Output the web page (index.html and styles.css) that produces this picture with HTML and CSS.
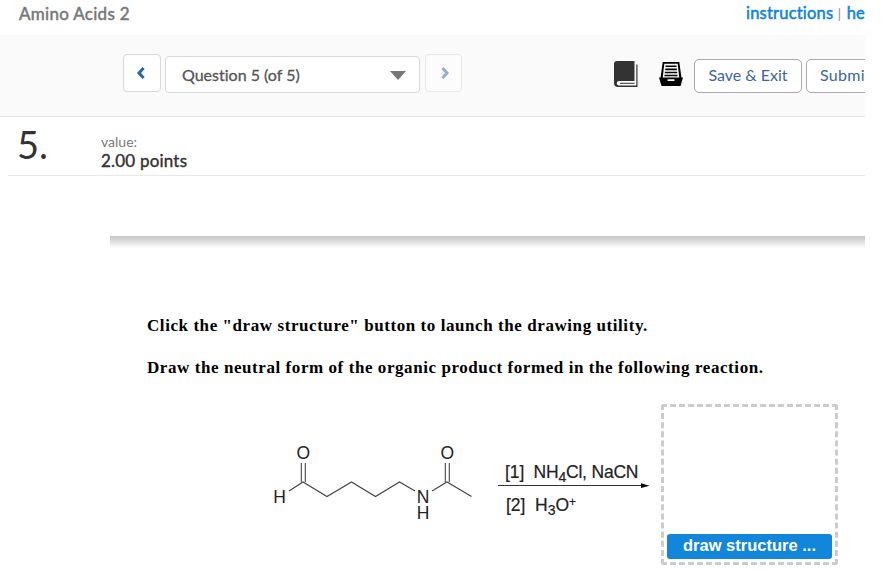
FILE: index.html
```
<!DOCTYPE html>
<html lang="en">
<head>
  <meta charset="UTF-8" />
  <title>Amino Acids 2</title>
  <link rel="stylesheet" href="styles.css">
</head>
<body>
  <div class="page">
    <div class="header">
      <h1>Amino Acids 2</h1>
      <div class="links"><a>instructions</a> <span>|</span> <a>help</a></div>
    </div>
    <div class="toolbar">
      <button class="nav prev">
        <svg width="10" height="14" viewBox="0 0 10 14"><path d="M7.6 2 3 7l4.6 5" /></svg>
      </button>
      <div class="select">
        <span>Question 5 (of 5)</span>
        <svg width="16" height="9" viewBox="0 0 16 9"><path d="M0 0h16L8 9z" /></svg>
      </div>
      <button class="nav next">
        <svg width="10" height="14" viewBox="0 0 10 14"><path d="M2.4 2 7 7l-4.6 5" /></svg>
      </button>
      <svg class="book" width="24" height="27" viewBox="0 0 24 27">
        <path d="M3 0h17.500v20H5c-3 0-3 4.500 0 4.500h17.300V3.500h1.200V26H4c-2.500 0-4-1.500-4-4V3c0-2 1-3 3-3z" />
        <path d="M6 22.300h14.500" class="line" />
      </svg>
      <svg class="tray" width="24" height="24" viewBox="0 0 24 24">
        <path d="M3.700 0h16.600l2.200 16h-2.200L18.700 1.700H5.300L3.700 16H1.500z" />
        <path d="M6.500 3.500h11v1.600h-11zM6.200 6.600h11.600v1.600H6.200zM5.800 9.700h12.400v1.600H5.800zM5.500 12.700h13v1.500h-13z" />
        <path fill-rule="evenodd" d="M0 15.500h24L21.500 24h-19zM8.500 17.200v1.900h7v-1.900z" />
      </svg>
      <button class="action save">Save &amp; Exit</button>
      <button class="action submit">Submit</button>
    </div>
    <div class="question">
      <div class="number">5.</div>
      <div class="points">
        <label>value:</label>
        <strong>2.00 points</strong>
      </div>
    </div>
    <div class="content">
      <p class="launch">Click the "draw structure" button to launch the drawing utility.</p>
      <p class="task">Draw the neutral form of the organic product formed in the following reaction.</p>
      <div class="reaction">
        <svg width="390" height="90" viewBox="265 438 390 90">
          <g class="bonds">
            <path d="M289 491 303 482 327 496.500 351.500 482 375.500 496.500 399.500 482 415 491" />
            <path d="M301.300 463v19M305.300 463v19" />
            <path d="M432 491 447 482 471.500 496.500" />
            <path d="M445.300 463v19M449.300 463v19" />
          </g>
          <g class="atoms">
            <text x="303.200" y="459">O</text>
            <text x="279.500" y="503">H</text>
            <text x="423" y="503">N</text>
            <text x="423" y="518.500">H</text>
            <text x="447.200" y="459">O</text>
          </g>
          <path class="arrow" d="M498 485.500h145" />
          <path d="M641 483.200l8.500 2.500-8.500 2.300z" />
          <g class="reagents">
            <text x="505" y="477.500">[1]</text>
            <text x="533.500" y="477.500" textLength="105">NH<tspan class="sub" dy="4">4</tspan><tspan dy="-4">Cl, NaCN</tspan></text>
            <text x="506" y="511">[2]</text>
            <text x="535" y="511">H<tspan class="sub" dy="4">3</tspan><tspan dy="-4">O</tspan><tspan class="sup" dy="-5">+</tspan></text>
          </g>
        </svg>
        <div class="answer">
          <button>draw structure ...</button>
        </div>
      </div>
    </div>
  </div>
</body>
</html>
```
FILE: styles.css
```
* { box-sizing: border-box; }
body { margin: 0; background: white; font-family: Lato, sans-serif; font-variant-ligatures: none; overflow: hidden; }
button { padding: 0; font-family: inherit; background: white; }
.page { width: 865px; height: 580px; overflow: hidden; }

.header { height: 35px; padding: 3px 0 0 19px; display: flex; line-height: 21px; white-space: nowrap; }
.header h1 { width: 727px; flex-shrink: 0; margin: 0; font-size: 17px; font-weight: normal; letter-spacing: 0.3px; color: #777; -webkit-text-stroke: 0.5px #777; }
.links { flex-shrink: 0; font-size: 16.5px; letter-spacing: 0.2px; color: #888; }
.links span { margin-right: 1px; font-size: 13px; }
.links a { color: #0d84d8; -webkit-text-stroke: 0.5px #0d84d8; }

.toolbar { height: 82px; padding: 19px 0 0 123px; display: flex; align-items: flex-start; background: #fafafa; border-bottom: 1px solid #e8e8e8; }
.toolbar > * { flex-shrink: 0; }
.nav { width: 38px; height: 38px; padding-right: 3px; display: flex; align-items: center; justify-content: center; border: 1px solid #d8d8d8; border-radius: 4px; }
.nav path { fill: none; stroke: #2867a5; stroke-width: 3; }
.next { width: 37px; margin-left: 5px; padding: 0 0 0 2px; background: #fcfcfc; border-color: #e8e8e8; }
.next path { stroke: #94afcf; }
.select { width: 255px; height: 37px; margin: 2px 0 0 4px; padding: 0 13px 0 16px; display: flex; align-items: center; justify-content: space-between; background: white; border: 1px solid #d8d8d8; border-radius: 4px; font-size: 16px; color: #555; -webkit-text-stroke: 0.3px #555; }
.select svg { margin-top: 2px; fill: #777; }
.book { margin: 7px 0 0 152px; fill: #333; }
.book .line { stroke: #333; }
.tray { margin: 8px 0 0 21px; }
.action { height: 34px; margin-top: 5px; padding-bottom: 3px; border: 1px solid #aaa; border-radius: 5px; font-size: 16px; color: #416598; }
.save { width: 108px; margin-left: 11px; }
.submit { width: 80px; margin-left: 4px; padding-left: 13px; text-align: left; letter-spacing: 0.3px; }

.question { height: 59px; margin-left: 8px; padding-left: 9px; display: flex; border-bottom: 1px solid #e8e8e8; }
.number { width: 84px; font-size: 38px; line-height: 55px; color: #333; }
.points { padding-top: 16px; }
.points label { display: block; font-size: 14px; line-height: 17px; color: #777; }
.points strong { display: block; font-size: 17px; line-height: 22px; font-weight: normal; letter-spacing: 0.2px; color: #333; -webkit-text-stroke: 0.4px #333; }

.content { margin: 60px 0 0 110px; padding: 78px 0 0 37px; background: linear-gradient(#c4c4c4, #fff) no-repeat; background-size: 100% 12px; }
.content p { margin: 0 0 18px; font: bold 17px/24px "Liberation Serif", serif; color: black; white-space: nowrap; }
.launch, .task { letter-spacing: 0.57px; }
.reaction { padding: 6px 0 0 118px; display: flex; align-items: flex-start; }
.reaction > svg { margin-top: 34px; font-family: "Liberation Sans", sans-serif; }
.bonds { fill: none; stroke: #444; stroke-width: 1.1; }
.atoms { font-size: 17.5px; text-anchor: middle; fill: #222; }
.arrow { stroke: #333; stroke-width: 1.2; }
.reagents { font-size: 17.5px; fill: #222; stroke: #222; stroke-width: 0.2px; }
.sub { font-size: 14px; }
.sup { font-size: 12px; }
.answer { width: 177px; height: 161px; margin-left: 6px; padding: 3px; display: flex; align-items: flex-end; border: 3px dashed #ccc; border-radius: 3px; }
.answer button { width: 165px; height: 25px; padding-bottom: 2px; border: 0; border-radius: 3px; background: #1186da; color: white; font: bold 16.5px "Liberation Sans", sans-serif; }
```
